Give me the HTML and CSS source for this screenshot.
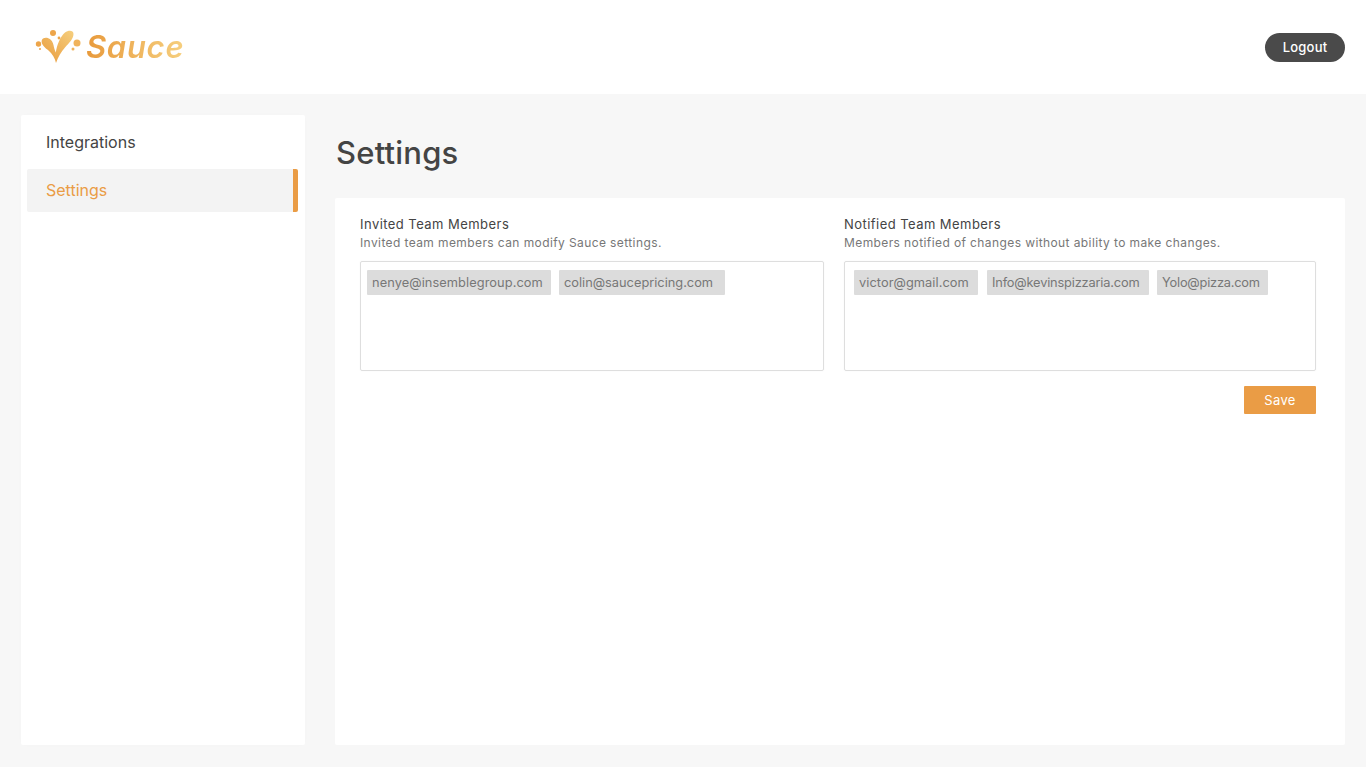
FILE: index.html
```html
<!DOCTYPE html>
<html lang="en">
<head>
<meta charset="utf-8">
<title>Sauce - Settings</title>
<link rel="stylesheet" href="styles.css">
</head>
<body>
<header class="topbar">
  <a class="logo" href="#">
    <svg class="logo-mark" width="47" height="36" viewBox="0 0 47 36" aria-hidden="true">
      <defs>
        <linearGradient id="lg" x1="0" y1="1" x2="1" y2="0">
          <stop offset="0" stop-color="#e89a3c"/>
          <stop offset="1" stop-color="#f6cf7e"/>
        </linearGradient>
      </defs>
      <path fill="url(#lg)" d="M21 34 C20 29 17.500 25 13 21 C7 17 5 12 8 9.500 C12 7.500 17 10 18.500 16 C19 19 19.800 21 20.800 23.500 C22 16 25 8 30 3.500 C33.500 .8 38.500 1 38.500 5 C38.500 10 34 14 30 18.500 C26 23 23 28 21 34 Z"/>
      <circle cx="18" cy="4" r="3" fill="#eda54a"/>
      <circle cx="24" cy="9" r="1.400" fill="#eda54a"/>
      <circle cx="3.500" cy="15" r="2.700" fill="#eda54a"/>
      <circle cx="5" cy="20" r="1" fill="#eda54a"/>
      <circle cx="42" cy="14" r="3.500" fill="#f0b35c"/>
      <circle cx="38" cy="20" r="1.500" fill="#f0b35c"/>
    </svg>
    <span class="logo-text">Sauce</span>
  </a>
  <button class="logout" type="button">Logout</button>
</header>
<div class="layout">
  <nav class="sidebar">
    <a class="nav-item" href="#">Integrations</a>
    <a class="nav-item active" href="#">Settings</a>
  </nav>
  <main class="main">
    <h1 class="page-title">Settings</h1>
    <section class="card">
      <div class="columns">
        <div class="field">
          <div class="field-label">Invited Team Members</div>
          <div class="field-help">Invited team members can modify Sauce settings.</div>
          <div class="tag-box tag-box-left">
            <span class="tag">nenye@insemblegroup.com</span>
            <span class="tag">colin@saucepricing.com</span>
          </div>
        </div>
        <div class="field">
          <div class="field-label">Notified Team Members</div>
          <div class="field-help">Members notified of changes without ability to make changes.</div>
          <div class="tag-box tag-box-right">
            <span class="tag">victor@gmail.com</span>
            <span class="tag">Info@kevinspizzaria.com</span>
            <span class="tag">Yolo@pizza.com</span>
          </div>
        </div>
      </div>
      <div class="actions"><button class="save" type="button">Save</button></div>
    </section>
  </main>
</div>
</body>
</html>
```
FILE: styles.css
```css
* { box-sizing: border-box; }
html, body { height: 100%; }
body {
  margin: 0;
  height: 767px;
  overflow: hidden;
  display: flex;
  flex-direction: column;
  background: #f7f7f7;
  color: #444;
  font-family: "Inter", "Open Sans", sans-serif;
}
a { text-decoration: none; color: inherit; }
.topbar {
  height: 94px;
  flex: none;
  display: flex;
  align-items: center;
  justify-content: space-between;
  padding: 0 21px 0 35px;
  background: #fff;
}
.logo { display: flex; align-items: center; gap: 4px; }
.logo-mark { display: block; }
.logo-text {
  font-family: "Inter", sans-serif;
  font-style: italic;
  font-weight: 600;
  font-size: 31px;
  letter-spacing: .7px;
  line-height: 36px;
  background: linear-gradient(90deg, #e89a3c, #f6cf7e);
  -webkit-background-clip: text;
  background-clip: text;
  color: transparent;
}
.logout {
  width: 80px;
  height: 29px;
  padding: 0;
  border: 0;
  border-radius: 15px;
  background: #4a4a4a;
  color: #fff;
  font: 500 13px "Inter", sans-serif;
  letter-spacing: .2px;
}
.layout {
  flex: 1;
  display: flex;
  gap: 30px;
  min-height: 0;
  padding: 21px 21px 22px;
}
.sidebar {
  width: 284px;
  flex: none;
  display: flex;
  flex-direction: column;
  gap: 5px;
  padding: 6px 7px 6px 6px;
  background: #fff;
  border-radius: 2px;
  box-shadow: 0 0 8px rgba(0,0,0,.012);
}
.nav-item {
  height: 43px;
  display: flex;
  align-items: center;
  padding: 0 0 2px 19px;
  font-size: 16px;
  color: #444;
  border-radius: 2px;
}
.nav-item.active {
  background: #f3f3f3;
  color: #ea9c45;
  border-right: 5px solid #ea9c45;
}
.main {
  flex: 1;
  min-width: 0;
  display: flex;
  flex-direction: column;
}
.page-title {
  margin: -2px 0 0;
  height: 85px;
  padding: 0 0 6px 1px;
  display: flex;
  align-items: center;
  font-size: 31px;
  font-weight: 500;
  letter-spacing: .2px;
  color: #444;
}
.card {
  flex: 1;
  padding: 17px 29px 0 25px;
  background: #fff;
  border-radius: 2px;
}
.columns {
  display: grid;
  grid-template-columns: 464px 472px;
  column-gap: 20px;
}
.field-label {
  font-size: 13px;
  line-height: 18px;
  letter-spacing: .45px;
  color: #444;
}
.field-help {
  margin: 1px 0 9px;
  font-size: 12px;
  line-height: 18px;
  letter-spacing: .4px;
  color: #777;
}
.tag-box {
  height: 110px;
  display: flex;
  align-items: flex-start;
  gap: 8px;
  padding-top: 8px;
  border: 1px solid #dedede;
  border-radius: 2px;
  box-shadow: 0 0 2px rgba(0,0,0,.04);
}
.tag-box-left { padding-left: 6px; }
.tag-box-right { padding-left: 9px; }
.tag {
  height: 25px;
  display: flex;
  align-items: center;
  padding: 0 5px;
  background: #dcdcdc;
  border-radius: 1px;
  font-size: 12.800px;
  color: #777;
  white-space: nowrap;
}
.tag-box-left .tag:nth-child(1) { width: 184px; letter-spacing: .08px; }
.tag-box-left .tag:nth-child(2) { width: 166px; }
.tag-box-right .tag:nth-child(1) { width: 124px; margin-right: 1px; letter-spacing: .06px; }
.tag-box-right .tag:nth-child(2) { width: 162px; letter-spacing: -.17px; }
.tag-box-right .tag:nth-child(3) { width: 111px; letter-spacing: -.2px; }
.actions {
  display: flex;
  justify-content: flex-end;
  margin-top: 15px;
}
.save {
  width: 72px;
  height: 28px;
  padding: 0;
  border: 0;
  border-radius: 1px;
  background: #ea9c45;
  color: #fff;
  font: 400 13px "Inter", sans-serif;
  letter-spacing: .3px;
}
```
